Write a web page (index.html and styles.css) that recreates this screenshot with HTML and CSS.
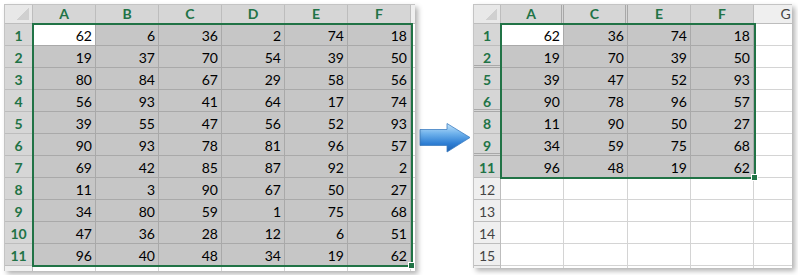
FILE: index.html
```html
<!DOCTYPE html>
<html>
<head>
<meta charset="utf-8">
<link rel="stylesheet" href="styles.css">
</head>
<body>
<div class="sheet left">
  <div class="grid gl">
    <div class="corner"></div><div class="ch x">A</div><div class="ch x">B</div><div class="ch x">C</div><div class="ch x">D</div><div class="ch x">E</div><div class="ch x">F</div><div class="ch"></div>
    <div class="rh x">1</div><div class="c s a">62</div><div class="c s">6</div><div class="c s">36</div><div class="c s">2</div><div class="c s">74</div><div class="c s">18</div><div class="c"></div>
    <div class="rh x">2</div><div class="c s">19</div><div class="c s">37</div><div class="c s">70</div><div class="c s">54</div><div class="c s">39</div><div class="c s">50</div><div class="c"></div>
    <div class="rh x">3</div><div class="c s">80</div><div class="c s">84</div><div class="c s">67</div><div class="c s">29</div><div class="c s">58</div><div class="c s">56</div><div class="c"></div>
    <div class="rh x">4</div><div class="c s">56</div><div class="c s">93</div><div class="c s">41</div><div class="c s">64</div><div class="c s">17</div><div class="c s">74</div><div class="c"></div>
    <div class="rh x">5</div><div class="c s">39</div><div class="c s">55</div><div class="c s">47</div><div class="c s">56</div><div class="c s">52</div><div class="c s">93</div><div class="c"></div>
    <div class="rh x">6</div><div class="c s">90</div><div class="c s">93</div><div class="c s">78</div><div class="c s">81</div><div class="c s">96</div><div class="c s">57</div><div class="c"></div>
    <div class="rh x">7</div><div class="c s">69</div><div class="c s">42</div><div class="c s">85</div><div class="c s">87</div><div class="c s">92</div><div class="c s">2</div><div class="c"></div>
    <div class="rh x">8</div><div class="c s">11</div><div class="c s">3</div><div class="c s">90</div><div class="c s">67</div><div class="c s">50</div><div class="c s">27</div><div class="c"></div>
    <div class="rh x">9</div><div class="c s">34</div><div class="c s">80</div><div class="c s">59</div><div class="c s">1</div><div class="c s">75</div><div class="c s">68</div><div class="c"></div>
    <div class="rh x">10</div><div class="c s">47</div><div class="c s">36</div><div class="c s">28</div><div class="c s">12</div><div class="c s">6</div><div class="c s">51</div><div class="c"></div>
    <div class="rh x">11</div><div class="c s">96</div><div class="c s">40</div><div class="c s">48</div><div class="c s">34</div><div class="c s">19</div><div class="c s">62</div><div class="c"></div>
    <div class="rh"></div><div class="c"></div><div class="c"></div><div class="c"></div><div class="c"></div><div class="c"></div><div class="c"></div><div class="c"></div>
  </div>
  <div class="sel sl"><span class="handle"></span></div>
</div>

<svg class="arrow" width="52" height="30" viewBox="0 0 52 30">
  <defs>
    <linearGradient id="ag" x1="0" y1="0" x2="0" y2="1">
      <stop offset="0" stop-color="#c4e4fa"/>
      <stop offset="0.35" stop-color="#6fb2ec"/>
      <stop offset="0.7" stop-color="#2f7fd4"/>
      <stop offset="1" stop-color="#1b5fae"/>
    </linearGradient>
  </defs>
  <path d="M1,6.5 H28 V0.5 L51,14.5 L28,29 V22.5 H1 Z" fill="url(#ag)" stroke="#3f7fc2" stroke-width="0.8" stroke-linejoin="round"/>
</svg>

<div class="sheet right">
  <div class="grid gr">
    <div class="corner"></div><div class="ch x hc">A</div><div class="ch x hc">C</div><div class="ch x">E</div><div class="ch x">F</div><div class="ch">G</div>
    <div class="rh x">1</div><div class="c s a">62</div><div class="c s">36</div><div class="c s">74</div><div class="c s">18</div><div class="c"></div>
    <div class="rh x hb">2</div><div class="c s">19</div><div class="c s">70</div><div class="c s">39</div><div class="c s">50</div><div class="c"></div>
    <div class="rh x">5</div><div class="c s">39</div><div class="c s">47</div><div class="c s">52</div><div class="c s">93</div><div class="c"></div>
    <div class="rh x hb">6</div><div class="c s">90</div><div class="c s">78</div><div class="c s">96</div><div class="c s">57</div><div class="c"></div>
    <div class="rh x">8</div><div class="c s">11</div><div class="c s">90</div><div class="c s">50</div><div class="c s">27</div><div class="c"></div>
    <div class="rh x hb">9</div><div class="c s">34</div><div class="c s">59</div><div class="c s">75</div><div class="c s">68</div><div class="c"></div>
    <div class="rh x">11</div><div class="c s">96</div><div class="c s">48</div><div class="c s">19</div><div class="c s">62</div><div class="c"></div>
    <div class="rh">12</div><div class="c"></div><div class="c"></div><div class="c"></div><div class="c"></div><div class="c"></div>
    <div class="rh">13</div><div class="c"></div><div class="c"></div><div class="c"></div><div class="c"></div><div class="c"></div>
    <div class="rh">14</div><div class="c"></div><div class="c"></div><div class="c"></div><div class="c"></div><div class="c"></div>
    <div class="rh">15</div><div class="c"></div><div class="c"></div><div class="c"></div><div class="c"></div><div class="c"></div>
    <div class="rh"></div><div class="c"></div><div class="c"></div><div class="c"></div><div class="c"></div><div class="c"></div>
  </div>
  <div class="sel sr"><span class="handle"></span></div>
</div>
</body>
</html>
```

FILE: styles.css
```css
* { box-sizing: border-box; }

body {
  margin: 0;
  padding: 4px;
  background: #fff;
  display: flex;
  align-items: flex-start;
  font-family: Lato, "Liberation Sans", sans-serif;
  font-size: 14px;
}

.sheet {
  position: relative;
  background: #fff;
  border-left: 1px solid #c4c4c4;
  border-top: 1px solid #c4c4c4;
  overflow: hidden;
  box-shadow: 3px 3px 5px rgba(0, 0, 0, 0.3);
}

.left { width: 411px; height: 267px; }
.right { width: 319px; height: 264px; }

.arrow {
  align-self: center;
  margin: 0 2px 0 4px;
  flex: none;
}

.grid { display: grid; }

.gl {
  grid-template-columns: 28px repeat(6, 63px) 64px;
  grid-template-rows: 19px repeat(12, 22px);
}

.gr {
  grid-template-columns: 27px 63px 64px 63px 63px 64px;
  grid-template-rows: 19px repeat(12, 22px);
}

.grid > div {
  border-right: 1px solid #d4d4d4;
  border-bottom: 1px solid #d4d4d4;
}

.c {
  text-align: right;
  padding: 3px 3px 0 0;
  line-height: 18px;
  color: #000;
}

.grid > .s {
  background: #c6c6c6;
  border-color: #a9a9a9;
}

.grid > .a { background: #fff; }

.grid > .ch {
  background: #efefef;
  border-color: #bdbdbd;
  text-align: center;
  line-height: 18px;
  color: #444;
}

.grid > .rh {
  background: #efefef;
  border-color: #bdbdbd;
  text-align: center;
  padding-top: 3px;
  line-height: 18px;
  color: #444;
}

.grid > .x {
  background: #d6d6d6;
  color: #217346;
  font-weight: bold;
}

.grid > .hb { border-bottom: 3px double #a8a8a8; }
.grid > .hc { border-right: 3px double #a8a8a8; }

.grid > .corner {
  position: relative;
  background: #e8e8e8;
  border-color: #bdbdbd;
}

.corner::after {
  content: "";
  position: absolute;
  right: 3px;
  bottom: 3px;
  width: 12px;
  height: 12px;
  background: linear-gradient(to bottom right, transparent 50%, #d0d0d0 50%);
}

.sel {
  position: absolute;
  border: 2px solid #217346;
}

.sl { left: 27px; top: 18px; width: 381px; height: 244px; }
.sr { left: 26px; top: 18px; width: 256px; height: 156px; }

.handle {
  position: absolute;
  right: -4px;
  bottom: -4px;
  width: 7px;
  height: 7px;
  background: #217346;
  border: 1px solid #fff;
}
```
